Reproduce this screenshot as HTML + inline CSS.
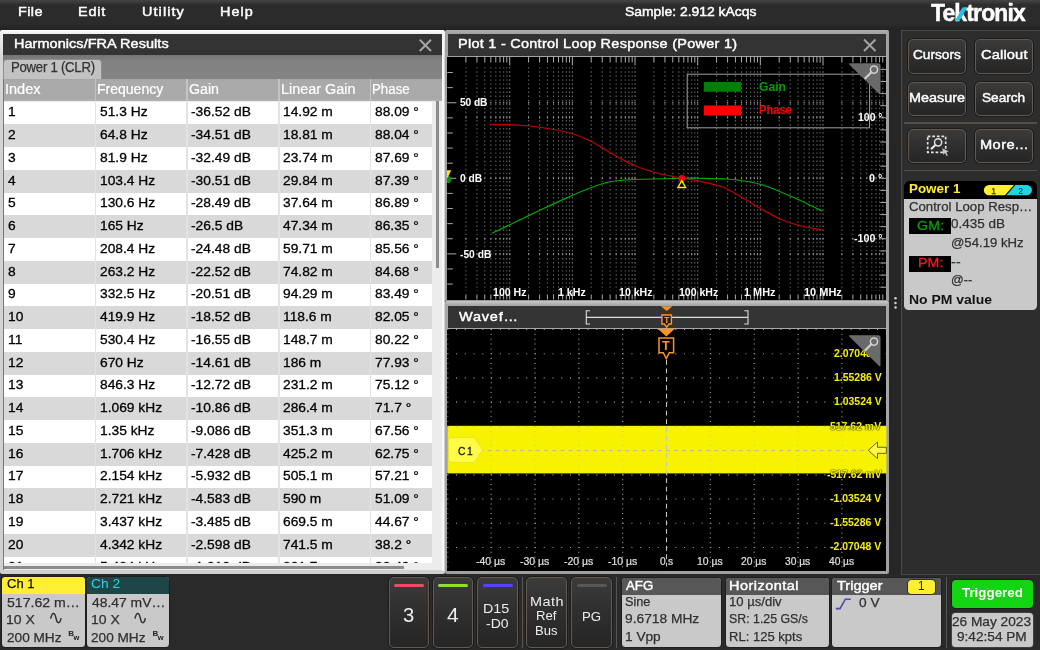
<!DOCTYPE html>
<html lang="en"><head><meta charset="utf-8"><title>Tektronix - Control Loop Response</title>
<style>
html,body{margin:0;padding:0;}
body{width:1040px;height:650px;overflow:hidden;background:#262626;position:relative;
 font-family:"Liberation Sans",sans-serif;}
.b{position:absolute;box-sizing:border-box;}
.t{position:absolute;white-space:nowrap;line-height:1;transform-origin:0 0;display:block;}
svg{position:absolute;overflow:visible;}
#screen{position:absolute;left:0;top:0;width:1040px;height:650px;overflow:hidden;will-change:transform;}
</style></head>
<body>
<div id="screen">
<div id="menubar">
<div class="b" style="left:0px;top:0px;width:1040.00px;height:30.00px;background:linear-gradient(#454545 0,#2c2c2c 5px,#2b2b2b 24px,#222 30px);"></div>
<span class="t" style="left:17.59px;top:5.00px;font-size:13.5px;color:#fff;transform:scaleX(1.0700);-webkit-text-stroke:0.45px #fff;letter-spacing:0.382px;">File</span>
<span class="t" style="left:77.84px;top:5.00px;font-size:13.5px;color:#fff;transform:scaleX(1.0700);-webkit-text-stroke:0.45px #fff;letter-spacing:0.720px;">Edit</span>
<span class="t" style="left:141.92px;top:5.00px;font-size:13.5px;color:#fff;transform:scaleX(1.0700);-webkit-text-stroke:0.45px #fff;letter-spacing:1.015px;">Utility</span>
<span class="t" style="left:219.84px;top:5.00px;font-size:13.5px;color:#fff;transform:scaleX(1.0700);-webkit-text-stroke:0.45px #fff;letter-spacing:0.950px;">Help</span>
<span class="t" style="left:624.87px;top:5.00px;font-size:13.2px;color:#fff;transform:scaleX(1.0551);-webkit-text-stroke:0.45px #fff;">Sample: 2.912 kAcqs</span>
<span class="t" style="left:931.37px;top:1.00px;font-size:24.6px;color:#fff;font-weight:bold;transform:scaleX(0.9300);-webkit-text-stroke:0.5px #fff;letter-spacing:-0.873px;">Tektronix</span>
<svg class="b" style="left:950px;top:4px;width:22px;height:20px" viewBox="950 4 22 20"><path d="M955 20.7 L962.6 7.4 L967.2 7.4 L959.6 20.7 Z" fill="#22bfe8"/></svg>
</div>
<div id="results">
<div class="b" style="left:0px;top:30px;width:444.50px;height:544.00px;background:linear-gradient(#fff,#f0f0f0 3px,#d4d4d4 30px,#d0d0d0);border-radius:2px;"></div>
<div class="b" style="left:2.6px;top:33.5px;width:439.40px;height:21.50px;background:#333;"></div>
<span class="t" style="left:13.84px;top:37.00px;font-size:13.5px;color:#fff;transform:scaleX(1.0700);-webkit-text-stroke:0.45px #fff;letter-spacing:0.062px;">Harmonics/FRA Results</span>
<svg class="b" style="left:417px;top:37px;width:16px;height:16px" viewBox="417 37 16 16"><path d="M419.8 39.8 L431 51 M431 39.8 L419.8 51" stroke="#a4a4a4" stroke-width="2" fill="none"/></svg>
<div class="b" style="left:2.6px;top:55px;width:439.40px;height:24.00px;background:linear-gradient(#747474,#828282 6px,#848484);"></div>
<div class="b" style="left:2.6px;top:79px;width:1.40px;height:491.00px;background:#777;"></div>
<div class="b" style="left:4px;top:60px;width:97.00px;height:19.00px;background:#c2c2c2;border-radius:3px 3px 0 0;box-shadow:0 0 0 0.5px #999;"></div>
<span class="t" style="left:10.84px;top:60.00px;font-size:14.2px;color:#333;transform:scaleX(0.9300);letter-spacing:-0.288px;-webkit-text-stroke:0.25px #333;">Power 1 (CLR)</span>
<div class="b" style="left:4px;top:79px;width:438.00px;height:22.40px;background:linear-gradient(#a4a4a4,#aaa 2px,#a9a9a9 90%,#b4b4b4);"></div>
<div class="b" style="left:94.7px;top:79px;width:1.60px;height:22.00px;background:#c4c4c4;"></div>
<div class="b" style="left:186.2px;top:79px;width:1.60px;height:22.00px;background:#c4c4c4;"></div>
<div class="b" style="left:278.2px;top:79px;width:1.60px;height:22.00px;background:#c4c4c4;"></div>
<div class="b" style="left:369.7px;top:79px;width:1.60px;height:22.00px;background:#c4c4c4;"></div>
<span class="t" style="left:5.19px;top:83.00px;font-size:13.8px;color:#fff;transform:scaleX(1.0537);-webkit-text-stroke:0.2px #fff;">Index</span>
<span class="t" style="left:96.78px;top:83.00px;font-size:13.8px;color:#fff;transform:scaleX(1.0156);-webkit-text-stroke:0.2px #fff;">Frequency</span>
<span class="t" style="left:189.49px;top:83.00px;font-size:13.8px;color:#fff;transform:scaleX(1.0290);-webkit-text-stroke:0.2px #fff;">Gain</span>
<span class="t" style="left:280.85px;top:83.00px;font-size:13.8px;color:#fff;transform:scaleX(1.0430);-webkit-text-stroke:0.2px #fff;">Linear Gain</span>
<span class="t" style="left:372.44px;top:83.00px;font-size:13.8px;color:#fff;transform:scaleX(0.9635);-webkit-text-stroke:0.2px #fff;">Phase</span>
<div class="b" style="left:4px;top:101px;width:438.00px;height:465.00px;background:#ececec;"></div>
<div class="b" style="left:4px;top:101px;width:438px;height:463px;overflow:hidden">
<div class="b" style="left:0;top:0.50px;width:428px;height:22.75px;background:#fff"></div>
<span class="t" style="left:4.10px;top:4.00px;font-size:13.6px;color:#000;transform:scaleX(1.0150);-webkit-text-stroke:0.3px #000;">1</span>
<span class="t" style="left:95.60px;top:4.00px;font-size:13.6px;color:#000;transform:scaleX(1.0150);-webkit-text-stroke:0.3px #000;">51.3 Hz</span>
<span class="t" style="left:187.10px;top:4.00px;font-size:13.6px;color:#000;transform:scaleX(1.0150);-webkit-text-stroke:0.3px #000;">-36.52 dB</span>
<span class="t" style="left:279.10px;top:4.00px;font-size:13.6px;color:#000;transform:scaleX(1.0150);-webkit-text-stroke:0.3px #000;">14.92 m</span>
<span class="t" style="left:370.60px;top:4.00px;font-size:13.6px;color:#000;transform:scaleX(1.0150);-webkit-text-stroke:0.3px #000;">88.09 °</span>
<div class="b" style="left:0;top:23.25px;width:428px;height:22.75px;background:#d9d9d9"></div>
<span class="t" style="left:4.10px;top:27.00px;font-size:13.6px;color:#000;transform:scaleX(1.0150);-webkit-text-stroke:0.3px #000;">2</span>
<span class="t" style="left:95.60px;top:27.00px;font-size:13.6px;color:#000;transform:scaleX(1.0150);-webkit-text-stroke:0.3px #000;">64.8 Hz</span>
<span class="t" style="left:187.10px;top:27.00px;font-size:13.6px;color:#000;transform:scaleX(1.0150);-webkit-text-stroke:0.3px #000;">-34.51 dB</span>
<span class="t" style="left:279.10px;top:27.00px;font-size:13.6px;color:#000;transform:scaleX(1.0150);-webkit-text-stroke:0.3px #000;">18.81 m</span>
<span class="t" style="left:370.60px;top:27.00px;font-size:13.6px;color:#000;transform:scaleX(1.0150);-webkit-text-stroke:0.3px #000;">88.04 °</span>
<div class="b" style="left:0;top:46.00px;width:428px;height:22.75px;background:#fff"></div>
<span class="t" style="left:4.10px;top:50.00px;font-size:13.6px;color:#000;transform:scaleX(1.0150);-webkit-text-stroke:0.3px #000;">3</span>
<span class="t" style="left:95.60px;top:50.00px;font-size:13.6px;color:#000;transform:scaleX(1.0150);-webkit-text-stroke:0.3px #000;">81.9 Hz</span>
<span class="t" style="left:187.10px;top:50.00px;font-size:13.6px;color:#000;transform:scaleX(1.0150);-webkit-text-stroke:0.3px #000;">-32.49 dB</span>
<span class="t" style="left:279.10px;top:50.00px;font-size:13.6px;color:#000;transform:scaleX(1.0150);-webkit-text-stroke:0.3px #000;">23.74 m</span>
<span class="t" style="left:370.60px;top:50.00px;font-size:13.6px;color:#000;transform:scaleX(1.0150);-webkit-text-stroke:0.3px #000;">87.69 °</span>
<div class="b" style="left:0;top:68.75px;width:428px;height:22.75px;background:#d9d9d9"></div>
<span class="t" style="left:4.10px;top:73.00px;font-size:13.6px;color:#000;transform:scaleX(1.0150);-webkit-text-stroke:0.3px #000;">4</span>
<span class="t" style="left:95.60px;top:73.00px;font-size:13.6px;color:#000;transform:scaleX(1.0150);-webkit-text-stroke:0.3px #000;">103.4 Hz</span>
<span class="t" style="left:187.10px;top:73.00px;font-size:13.6px;color:#000;transform:scaleX(1.0150);-webkit-text-stroke:0.3px #000;">-30.51 dB</span>
<span class="t" style="left:279.10px;top:73.00px;font-size:13.6px;color:#000;transform:scaleX(1.0150);-webkit-text-stroke:0.3px #000;">29.84 m</span>
<span class="t" style="left:370.60px;top:73.00px;font-size:13.6px;color:#000;transform:scaleX(1.0150);-webkit-text-stroke:0.3px #000;">87.39 °</span>
<div class="b" style="left:0;top:91.50px;width:428px;height:22.75px;background:#fff"></div>
<span class="t" style="left:4.10px;top:95.00px;font-size:13.6px;color:#000;transform:scaleX(1.0150);-webkit-text-stroke:0.3px #000;">5</span>
<span class="t" style="left:95.60px;top:95.00px;font-size:13.6px;color:#000;transform:scaleX(1.0150);-webkit-text-stroke:0.3px #000;">130.6 Hz</span>
<span class="t" style="left:187.10px;top:95.00px;font-size:13.6px;color:#000;transform:scaleX(1.0150);-webkit-text-stroke:0.3px #000;">-28.49 dB</span>
<span class="t" style="left:279.10px;top:95.00px;font-size:13.6px;color:#000;transform:scaleX(1.0150);-webkit-text-stroke:0.3px #000;">37.64 m</span>
<span class="t" style="left:370.60px;top:95.00px;font-size:13.6px;color:#000;transform:scaleX(1.0150);-webkit-text-stroke:0.3px #000;">86.89 °</span>
<div class="b" style="left:0;top:114.25px;width:428px;height:22.75px;background:#d9d9d9"></div>
<span class="t" style="left:4.10px;top:118.00px;font-size:13.6px;color:#000;transform:scaleX(1.0150);-webkit-text-stroke:0.3px #000;">6</span>
<span class="t" style="left:95.60px;top:118.00px;font-size:13.6px;color:#000;transform:scaleX(1.0150);-webkit-text-stroke:0.3px #000;">165 Hz</span>
<span class="t" style="left:187.10px;top:118.00px;font-size:13.6px;color:#000;transform:scaleX(1.0150);-webkit-text-stroke:0.3px #000;">-26.5 dB</span>
<span class="t" style="left:279.10px;top:118.00px;font-size:13.6px;color:#000;transform:scaleX(1.0150);-webkit-text-stroke:0.3px #000;">47.34 m</span>
<span class="t" style="left:370.60px;top:118.00px;font-size:13.6px;color:#000;transform:scaleX(1.0150);-webkit-text-stroke:0.3px #000;">86.35 °</span>
<div class="b" style="left:0;top:137.00px;width:428px;height:22.75px;background:#fff"></div>
<span class="t" style="left:4.10px;top:141.00px;font-size:13.6px;color:#000;transform:scaleX(1.0150);-webkit-text-stroke:0.3px #000;">7</span>
<span class="t" style="left:95.60px;top:141.00px;font-size:13.6px;color:#000;transform:scaleX(1.0150);-webkit-text-stroke:0.3px #000;">208.4 Hz</span>
<span class="t" style="left:187.10px;top:141.00px;font-size:13.6px;color:#000;transform:scaleX(1.0150);-webkit-text-stroke:0.3px #000;">-24.48 dB</span>
<span class="t" style="left:279.10px;top:141.00px;font-size:13.6px;color:#000;transform:scaleX(1.0150);-webkit-text-stroke:0.3px #000;">59.71 m</span>
<span class="t" style="left:370.60px;top:141.00px;font-size:13.6px;color:#000;transform:scaleX(1.0150);-webkit-text-stroke:0.3px #000;">85.56 °</span>
<div class="b" style="left:0;top:159.75px;width:428px;height:22.75px;background:#d9d9d9"></div>
<span class="t" style="left:4.10px;top:164.00px;font-size:13.6px;color:#000;transform:scaleX(1.0150);-webkit-text-stroke:0.3px #000;">8</span>
<span class="t" style="left:95.60px;top:164.00px;font-size:13.6px;color:#000;transform:scaleX(1.0150);-webkit-text-stroke:0.3px #000;">263.2 Hz</span>
<span class="t" style="left:187.10px;top:164.00px;font-size:13.6px;color:#000;transform:scaleX(1.0150);-webkit-text-stroke:0.3px #000;">-22.52 dB</span>
<span class="t" style="left:279.10px;top:164.00px;font-size:13.6px;color:#000;transform:scaleX(1.0150);-webkit-text-stroke:0.3px #000;">74.82 m</span>
<span class="t" style="left:370.60px;top:164.00px;font-size:13.6px;color:#000;transform:scaleX(1.0150);-webkit-text-stroke:0.3px #000;">84.68 °</span>
<div class="b" style="left:0;top:182.50px;width:428px;height:22.75px;background:#fff"></div>
<span class="t" style="left:4.10px;top:186.00px;font-size:13.6px;color:#000;transform:scaleX(1.0150);-webkit-text-stroke:0.3px #000;">9</span>
<span class="t" style="left:95.60px;top:186.00px;font-size:13.6px;color:#000;transform:scaleX(1.0150);-webkit-text-stroke:0.3px #000;">332.5 Hz</span>
<span class="t" style="left:187.10px;top:186.00px;font-size:13.6px;color:#000;transform:scaleX(1.0150);-webkit-text-stroke:0.3px #000;">-20.51 dB</span>
<span class="t" style="left:279.10px;top:186.00px;font-size:13.6px;color:#000;transform:scaleX(1.0150);-webkit-text-stroke:0.3px #000;">94.29 m</span>
<span class="t" style="left:370.60px;top:186.00px;font-size:13.6px;color:#000;transform:scaleX(1.0150);-webkit-text-stroke:0.3px #000;">83.49 °</span>
<div class="b" style="left:0;top:205.25px;width:428px;height:22.75px;background:#d9d9d9"></div>
<span class="t" style="left:4.10px;top:209.00px;font-size:13.6px;color:#000;transform:scaleX(1.0150);-webkit-text-stroke:0.3px #000;">10</span>
<span class="t" style="left:95.60px;top:209.00px;font-size:13.6px;color:#000;transform:scaleX(1.0150);-webkit-text-stroke:0.3px #000;">419.9 Hz</span>
<span class="t" style="left:187.10px;top:209.00px;font-size:13.6px;color:#000;transform:scaleX(1.0150);-webkit-text-stroke:0.3px #000;">-18.52 dB</span>
<span class="t" style="left:279.10px;top:209.00px;font-size:13.6px;color:#000;transform:scaleX(1.0150);-webkit-text-stroke:0.3px #000;">118.6 m</span>
<span class="t" style="left:370.60px;top:209.00px;font-size:13.6px;color:#000;transform:scaleX(1.0150);-webkit-text-stroke:0.3px #000;">82.05 °</span>
<div class="b" style="left:0;top:228.00px;width:428px;height:22.75px;background:#fff"></div>
<span class="t" style="left:4.10px;top:232.00px;font-size:13.6px;color:#000;transform:scaleX(1.0150);-webkit-text-stroke:0.3px #000;">11</span>
<span class="t" style="left:95.60px;top:232.00px;font-size:13.6px;color:#000;transform:scaleX(1.0150);-webkit-text-stroke:0.3px #000;">530.4 Hz</span>
<span class="t" style="left:187.10px;top:232.00px;font-size:13.6px;color:#000;transform:scaleX(1.0150);-webkit-text-stroke:0.3px #000;">-16.55 dB</span>
<span class="t" style="left:279.10px;top:232.00px;font-size:13.6px;color:#000;transform:scaleX(1.0150);-webkit-text-stroke:0.3px #000;">148.7 m</span>
<span class="t" style="left:370.60px;top:232.00px;font-size:13.6px;color:#000;transform:scaleX(1.0150);-webkit-text-stroke:0.3px #000;">80.22 °</span>
<div class="b" style="left:0;top:250.75px;width:428px;height:22.75px;background:#d9d9d9"></div>
<span class="t" style="left:4.10px;top:255.00px;font-size:13.6px;color:#000;transform:scaleX(1.0150);-webkit-text-stroke:0.3px #000;">12</span>
<span class="t" style="left:95.60px;top:255.00px;font-size:13.6px;color:#000;transform:scaleX(1.0150);-webkit-text-stroke:0.3px #000;">670 Hz</span>
<span class="t" style="left:187.10px;top:255.00px;font-size:13.6px;color:#000;transform:scaleX(1.0150);-webkit-text-stroke:0.3px #000;">-14.61 dB</span>
<span class="t" style="left:279.10px;top:255.00px;font-size:13.6px;color:#000;transform:scaleX(1.0150);-webkit-text-stroke:0.3px #000;">186 m</span>
<span class="t" style="left:370.60px;top:255.00px;font-size:13.6px;color:#000;transform:scaleX(1.0150);-webkit-text-stroke:0.3px #000;">77.93 °</span>
<div class="b" style="left:0;top:273.50px;width:428px;height:22.75px;background:#fff"></div>
<span class="t" style="left:4.10px;top:277.00px;font-size:13.6px;color:#000;transform:scaleX(1.0150);-webkit-text-stroke:0.3px #000;">13</span>
<span class="t" style="left:95.60px;top:277.00px;font-size:13.6px;color:#000;transform:scaleX(1.0150);-webkit-text-stroke:0.3px #000;">846.3 Hz</span>
<span class="t" style="left:187.10px;top:277.00px;font-size:13.6px;color:#000;transform:scaleX(1.0150);-webkit-text-stroke:0.3px #000;">-12.72 dB</span>
<span class="t" style="left:279.10px;top:277.00px;font-size:13.6px;color:#000;transform:scaleX(1.0150);-webkit-text-stroke:0.3px #000;">231.2 m</span>
<span class="t" style="left:370.60px;top:277.00px;font-size:13.6px;color:#000;transform:scaleX(1.0150);-webkit-text-stroke:0.3px #000;">75.12 °</span>
<div class="b" style="left:0;top:296.25px;width:428px;height:22.75px;background:#d9d9d9"></div>
<span class="t" style="left:4.10px;top:300.00px;font-size:13.6px;color:#000;transform:scaleX(1.0150);-webkit-text-stroke:0.3px #000;">14</span>
<span class="t" style="left:95.60px;top:300.00px;font-size:13.6px;color:#000;transform:scaleX(1.0150);-webkit-text-stroke:0.3px #000;">1.069 kHz</span>
<span class="t" style="left:187.10px;top:300.00px;font-size:13.6px;color:#000;transform:scaleX(1.0150);-webkit-text-stroke:0.3px #000;">-10.86 dB</span>
<span class="t" style="left:279.10px;top:300.00px;font-size:13.6px;color:#000;transform:scaleX(1.0150);-webkit-text-stroke:0.3px #000;">286.4 m</span>
<span class="t" style="left:370.60px;top:300.00px;font-size:13.6px;color:#000;transform:scaleX(1.0150);-webkit-text-stroke:0.3px #000;">71.7 °</span>
<div class="b" style="left:0;top:319.00px;width:428px;height:22.75px;background:#fff"></div>
<span class="t" style="left:4.10px;top:323.00px;font-size:13.6px;color:#000;transform:scaleX(1.0150);-webkit-text-stroke:0.3px #000;">15</span>
<span class="t" style="left:95.60px;top:323.00px;font-size:13.6px;color:#000;transform:scaleX(1.0150);-webkit-text-stroke:0.3px #000;">1.35 kHz</span>
<span class="t" style="left:187.10px;top:323.00px;font-size:13.6px;color:#000;transform:scaleX(1.0150);-webkit-text-stroke:0.3px #000;">-9.086 dB</span>
<span class="t" style="left:279.10px;top:323.00px;font-size:13.6px;color:#000;transform:scaleX(1.0150);-webkit-text-stroke:0.3px #000;">351.3 m</span>
<span class="t" style="left:370.60px;top:323.00px;font-size:13.6px;color:#000;transform:scaleX(1.0150);-webkit-text-stroke:0.3px #000;">67.56 °</span>
<div class="b" style="left:0;top:341.75px;width:428px;height:22.75px;background:#d9d9d9"></div>
<span class="t" style="left:4.10px;top:346.00px;font-size:13.6px;color:#000;transform:scaleX(1.0150);-webkit-text-stroke:0.3px #000;">16</span>
<span class="t" style="left:95.60px;top:346.00px;font-size:13.6px;color:#000;transform:scaleX(1.0150);-webkit-text-stroke:0.3px #000;">1.706 kHz</span>
<span class="t" style="left:187.10px;top:346.00px;font-size:13.6px;color:#000;transform:scaleX(1.0150);-webkit-text-stroke:0.3px #000;">-7.428 dB</span>
<span class="t" style="left:279.10px;top:346.00px;font-size:13.6px;color:#000;transform:scaleX(1.0150);-webkit-text-stroke:0.3px #000;">425.2 m</span>
<span class="t" style="left:370.60px;top:346.00px;font-size:13.6px;color:#000;transform:scaleX(1.0150);-webkit-text-stroke:0.3px #000;">62.75 °</span>
<div class="b" style="left:0;top:364.50px;width:428px;height:22.75px;background:#fff"></div>
<span class="t" style="left:4.10px;top:368.00px;font-size:13.6px;color:#000;transform:scaleX(1.0150);-webkit-text-stroke:0.3px #000;">17</span>
<span class="t" style="left:95.60px;top:368.00px;font-size:13.6px;color:#000;transform:scaleX(1.0150);-webkit-text-stroke:0.3px #000;">2.154 kHz</span>
<span class="t" style="left:187.10px;top:368.00px;font-size:13.6px;color:#000;transform:scaleX(1.0150);-webkit-text-stroke:0.3px #000;">-5.932 dB</span>
<span class="t" style="left:279.10px;top:368.00px;font-size:13.6px;color:#000;transform:scaleX(1.0150);-webkit-text-stroke:0.3px #000;">505.1 m</span>
<span class="t" style="left:370.60px;top:368.00px;font-size:13.6px;color:#000;transform:scaleX(1.0150);-webkit-text-stroke:0.3px #000;">57.21 °</span>
<div class="b" style="left:0;top:387.25px;width:428px;height:22.75px;background:#d9d9d9"></div>
<span class="t" style="left:4.10px;top:391.00px;font-size:13.6px;color:#000;transform:scaleX(1.0150);-webkit-text-stroke:0.3px #000;">18</span>
<span class="t" style="left:95.60px;top:391.00px;font-size:13.6px;color:#000;transform:scaleX(1.0150);-webkit-text-stroke:0.3px #000;">2.721 kHz</span>
<span class="t" style="left:187.10px;top:391.00px;font-size:13.6px;color:#000;transform:scaleX(1.0150);-webkit-text-stroke:0.3px #000;">-4.583 dB</span>
<span class="t" style="left:279.10px;top:391.00px;font-size:13.6px;color:#000;transform:scaleX(1.0150);-webkit-text-stroke:0.3px #000;">590 m</span>
<span class="t" style="left:370.60px;top:391.00px;font-size:13.6px;color:#000;transform:scaleX(1.0150);-webkit-text-stroke:0.3px #000;">51.09 °</span>
<div class="b" style="left:0;top:410.00px;width:428px;height:22.75px;background:#fff"></div>
<span class="t" style="left:4.10px;top:414.00px;font-size:13.6px;color:#000;transform:scaleX(1.0150);-webkit-text-stroke:0.3px #000;">19</span>
<span class="t" style="left:95.60px;top:414.00px;font-size:13.6px;color:#000;transform:scaleX(1.0150);-webkit-text-stroke:0.3px #000;">3.437 kHz</span>
<span class="t" style="left:187.10px;top:414.00px;font-size:13.6px;color:#000;transform:scaleX(1.0150);-webkit-text-stroke:0.3px #000;">-3.485 dB</span>
<span class="t" style="left:279.10px;top:414.00px;font-size:13.6px;color:#000;transform:scaleX(1.0150);-webkit-text-stroke:0.3px #000;">669.5 m</span>
<span class="t" style="left:370.60px;top:414.00px;font-size:13.6px;color:#000;transform:scaleX(1.0150);-webkit-text-stroke:0.3px #000;">44.67 °</span>
<div class="b" style="left:0;top:432.75px;width:428px;height:22.75px;background:#d9d9d9"></div>
<span class="t" style="left:4.10px;top:437.00px;font-size:13.6px;color:#000;transform:scaleX(1.0150);-webkit-text-stroke:0.3px #000;">20</span>
<span class="t" style="left:95.60px;top:437.00px;font-size:13.6px;color:#000;transform:scaleX(1.0150);-webkit-text-stroke:0.3px #000;">4.342 kHz</span>
<span class="t" style="left:187.10px;top:437.00px;font-size:13.6px;color:#000;transform:scaleX(1.0150);-webkit-text-stroke:0.3px #000;">-2.598 dB</span>
<span class="t" style="left:279.10px;top:437.00px;font-size:13.6px;color:#000;transform:scaleX(1.0150);-webkit-text-stroke:0.3px #000;">741.5 m</span>
<span class="t" style="left:370.60px;top:437.00px;font-size:13.6px;color:#000;transform:scaleX(1.0150);-webkit-text-stroke:0.3px #000;">38.2 °</span>
<div class="b" style="left:0;top:455.50px;width:428px;height:22.75px;background:#fff"></div>
<span class="t" style="left:4.10px;top:459.00px;font-size:13.6px;color:#000;transform:scaleX(1.0150);-webkit-text-stroke:0.3px #000;">21</span>
<span class="t" style="left:95.60px;top:459.00px;font-size:13.6px;color:#000;transform:scaleX(1.0150);-webkit-text-stroke:0.3px #000;">5.484 kHz</span>
<span class="t" style="left:187.10px;top:459.00px;font-size:13.6px;color:#000;transform:scaleX(1.0150);-webkit-text-stroke:0.3px #000;">-1.919 dB</span>
<span class="t" style="left:279.10px;top:459.00px;font-size:13.6px;color:#000;transform:scaleX(1.0150);-webkit-text-stroke:0.3px #000;">801.7 m</span>
<span class="t" style="left:370.60px;top:459.00px;font-size:13.6px;color:#000;transform:scaleX(1.0150);-webkit-text-stroke:0.3px #000;">30.49 °</span>
<div class="b" style="left:90.9px;top:0;width:1.4px;height:463px;background:#e3e3e3"></div>
<div class="b" style="left:182.4px;top:0;width:1.4px;height:463px;background:#e3e3e3"></div>
<div class="b" style="left:274.4px;top:0;width:1.4px;height:463px;background:#e3e3e3"></div>
<div class="b" style="left:365.9px;top:0;width:1.4px;height:463px;background:#e3e3e3"></div>
</div>
<div class="b" style="left:441.9px;top:33.5px;width:2.60px;height:537.50px;background:#f8f8f8;"></div>
<div class="b" style="left:436.3px;top:101px;width:2.90px;height:167.00px;background:#8c8c8c;"></div>
<div class="b" style="left:4px;top:562.5px;width:438.00px;height:7.80px;background:#ececec;"></div>
<div class="b" style="left:4px;top:566.2px;width:399.50px;height:3.00px;background:#8c8c8c;"></div>
</div>
<div id="plot1">
<div class="b" style="left:444.6px;top:30.3px;width:444.40px;height:271.70px;background:linear-gradient(#b4b0b0,#a4a4a4 3px,#999);border-radius:2px;"></div>
<div class="b" style="left:447.5px;top:33.5px;width:438.80px;height:22.00px;background:#333;"></div>
<span class="t" style="left:458.09px;top:37.00px;font-size:13.5px;color:#fff;transform:scaleX(1.0700);-webkit-text-stroke:0.45px #fff;letter-spacing:0.260px;">Plot 1 - Control Loop Response (Power 1)</span>
<svg class="b" style="left:860px;top:37px;width:18px;height:16px" viewBox="860 37 18 16"><path d="M864 39.5 L875.5 51 M875.5 39.5 L864 51" stroke="#a4a4a4" stroke-width="2" fill="none"/></svg>
<div class="b" style="left:447.3px;top:56.5px;width:439.00px;height:243.00px;background:#000;"></div>
<svg class="b" style="left:0;top:0;width:1040px;height:650px" viewBox="0 0 1040 650"><g fill="none" stroke-width="1.1" stroke-dasharray="1.4 2.66"><path d="M465.91 67.2V291" stroke="#646464"/><path d="M465.91 56.5v6M465.91 299.5v-5" stroke="#c0c0c0" stroke-width="0.9" stroke-dasharray="none"/><path d="M476.95 67.2V291" stroke="#646464"/><path d="M476.95 56.5v6M476.95 299.5v-5" stroke="#c0c0c0" stroke-width="0.9" stroke-dasharray="none"/><path d="M484.78 67.2V291" stroke="#646464"/><path d="M484.78 56.5v6M484.78 299.5v-5" stroke="#c0c0c0" stroke-width="0.9" stroke-dasharray="none"/><path d="M490.85 67.2V291" stroke="#646464"/><path d="M490.85 56.5v6M490.85 299.5v-5" stroke="#c0c0c0" stroke-width="0.9" stroke-dasharray="none"/><path d="M495.81 67.2V291" stroke="#646464"/><path d="M495.81 56.5v6M495.81 299.5v-5" stroke="#c0c0c0" stroke-width="0.9" stroke-dasharray="none"/><path d="M500.00 67.2V291" stroke="#646464"/><path d="M500.00 56.5v6M500.00 299.5v-5" stroke="#c0c0c0" stroke-width="0.9" stroke-dasharray="none"/><path d="M503.64 67.2V291" stroke="#646464"/><path d="M503.64 56.5v6M503.64 299.5v-5" stroke="#c0c0c0" stroke-width="0.9" stroke-dasharray="none"/><path d="M506.84 67.2V291" stroke="#646464"/><path d="M506.84 56.5v6M506.84 299.5v-5" stroke="#c0c0c0" stroke-width="0.9" stroke-dasharray="none"/><path d="M509.71 67.2V291" stroke="#828282"/><path d="M509.71 56.5v9M509.71 299.5v-8" stroke="#c0c0c0" stroke-width="0.9" stroke-dasharray="none"/><path d="M528.57 67.2V291" stroke="#646464"/><path d="M528.57 56.5v6M528.57 299.5v-5" stroke="#c0c0c0" stroke-width="0.9" stroke-dasharray="none"/><path d="M539.61 67.2V291" stroke="#646464"/><path d="M539.61 56.5v6M539.61 299.5v-5" stroke="#c0c0c0" stroke-width="0.9" stroke-dasharray="none"/><path d="M547.44 67.2V291" stroke="#646464"/><path d="M547.44 56.5v6M547.44 299.5v-5" stroke="#c0c0c0" stroke-width="0.9" stroke-dasharray="none"/><path d="M553.51 67.2V291" stroke="#646464"/><path d="M553.51 56.5v6M553.51 299.5v-5" stroke="#c0c0c0" stroke-width="0.9" stroke-dasharray="none"/><path d="M558.47 67.2V291" stroke="#646464"/><path d="M558.47 56.5v6M558.47 299.5v-5" stroke="#c0c0c0" stroke-width="0.9" stroke-dasharray="none"/><path d="M562.66 67.2V291" stroke="#646464"/><path d="M562.66 56.5v6M562.66 299.5v-5" stroke="#c0c0c0" stroke-width="0.9" stroke-dasharray="none"/><path d="M566.30 67.2V291" stroke="#646464"/><path d="M566.30 56.5v6M566.30 299.5v-5" stroke="#c0c0c0" stroke-width="0.9" stroke-dasharray="none"/><path d="M569.50 67.2V291" stroke="#646464"/><path d="M569.50 56.5v6M569.50 299.5v-5" stroke="#c0c0c0" stroke-width="0.9" stroke-dasharray="none"/><path d="M572.37 67.2V291" stroke="#828282"/><path d="M572.37 56.5v9M572.37 299.5v-8" stroke="#c0c0c0" stroke-width="0.9" stroke-dasharray="none"/><path d="M591.23 67.2V291" stroke="#646464"/><path d="M591.23 56.5v6M591.23 299.5v-5" stroke="#c0c0c0" stroke-width="0.9" stroke-dasharray="none"/><path d="M602.27 67.2V291" stroke="#646464"/><path d="M602.27 56.5v6M602.27 299.5v-5" stroke="#c0c0c0" stroke-width="0.9" stroke-dasharray="none"/><path d="M610.10 67.2V291" stroke="#646464"/><path d="M610.10 56.5v6M610.10 299.5v-5" stroke="#c0c0c0" stroke-width="0.9" stroke-dasharray="none"/><path d="M616.17 67.2V291" stroke="#646464"/><path d="M616.17 56.5v6M616.17 299.5v-5" stroke="#c0c0c0" stroke-width="0.9" stroke-dasharray="none"/><path d="M621.13 67.2V291" stroke="#646464"/><path d="M621.13 56.5v6M621.13 299.5v-5" stroke="#c0c0c0" stroke-width="0.9" stroke-dasharray="none"/><path d="M625.32 67.2V291" stroke="#646464"/><path d="M625.32 56.5v6M625.32 299.5v-5" stroke="#c0c0c0" stroke-width="0.9" stroke-dasharray="none"/><path d="M628.96 67.2V291" stroke="#646464"/><path d="M628.96 56.5v6M628.96 299.5v-5" stroke="#c0c0c0" stroke-width="0.9" stroke-dasharray="none"/><path d="M632.16 67.2V291" stroke="#646464"/><path d="M632.16 56.5v6M632.16 299.5v-5" stroke="#c0c0c0" stroke-width="0.9" stroke-dasharray="none"/><path d="M635.03 67.2V291" stroke="#828282"/><path d="M635.03 56.5v9M635.03 299.5v-8" stroke="#c0c0c0" stroke-width="0.9" stroke-dasharray="none"/><path d="M653.89 67.2V291" stroke="#646464"/><path d="M653.89 56.5v6M653.89 299.5v-5" stroke="#c0c0c0" stroke-width="0.9" stroke-dasharray="none"/><path d="M664.93 67.2V291" stroke="#646464"/><path d="M664.93 56.5v6M664.93 299.5v-5" stroke="#c0c0c0" stroke-width="0.9" stroke-dasharray="none"/><path d="M672.76 67.2V291" stroke="#646464"/><path d="M672.76 56.5v6M672.76 299.5v-5" stroke="#c0c0c0" stroke-width="0.9" stroke-dasharray="none"/><path d="M678.83 67.2V291" stroke="#646464"/><path d="M678.83 56.5v6M678.83 299.5v-5" stroke="#c0c0c0" stroke-width="0.9" stroke-dasharray="none"/><path d="M683.79 67.2V291" stroke="#646464"/><path d="M683.79 56.5v6M683.79 299.5v-5" stroke="#c0c0c0" stroke-width="0.9" stroke-dasharray="none"/><path d="M687.98 67.2V291" stroke="#646464"/><path d="M687.98 56.5v6M687.98 299.5v-5" stroke="#c0c0c0" stroke-width="0.9" stroke-dasharray="none"/><path d="M691.62 67.2V291" stroke="#646464"/><path d="M691.62 56.5v6M691.62 299.5v-5" stroke="#c0c0c0" stroke-width="0.9" stroke-dasharray="none"/><path d="M694.82 67.2V291" stroke="#646464"/><path d="M694.82 56.5v6M694.82 299.5v-5" stroke="#c0c0c0" stroke-width="0.9" stroke-dasharray="none"/><path d="M697.69 67.2V291" stroke="#828282"/><path d="M697.69 56.5v9M697.69 299.5v-8" stroke="#c0c0c0" stroke-width="0.9" stroke-dasharray="none"/><path d="M716.55 67.2V291" stroke="#646464"/><path d="M716.55 56.5v6M716.55 299.5v-5" stroke="#c0c0c0" stroke-width="0.9" stroke-dasharray="none"/><path d="M727.59 67.2V291" stroke="#646464"/><path d="M727.59 56.5v6M727.59 299.5v-5" stroke="#c0c0c0" stroke-width="0.9" stroke-dasharray="none"/><path d="M735.42 67.2V291" stroke="#646464"/><path d="M735.42 56.5v6M735.42 299.5v-5" stroke="#c0c0c0" stroke-width="0.9" stroke-dasharray="none"/><path d="M741.49 67.2V291" stroke="#646464"/><path d="M741.49 56.5v6M741.49 299.5v-5" stroke="#c0c0c0" stroke-width="0.9" stroke-dasharray="none"/><path d="M746.45 67.2V291" stroke="#646464"/><path d="M746.45 56.5v6M746.45 299.5v-5" stroke="#c0c0c0" stroke-width="0.9" stroke-dasharray="none"/><path d="M750.64 67.2V291" stroke="#646464"/><path d="M750.64 56.5v6M750.64 299.5v-5" stroke="#c0c0c0" stroke-width="0.9" stroke-dasharray="none"/><path d="M754.28 67.2V291" stroke="#646464"/><path d="M754.28 56.5v6M754.28 299.5v-5" stroke="#c0c0c0" stroke-width="0.9" stroke-dasharray="none"/><path d="M757.48 67.2V291" stroke="#646464"/><path d="M757.48 56.5v6M757.48 299.5v-5" stroke="#c0c0c0" stroke-width="0.9" stroke-dasharray="none"/><path d="M760.35 67.2V291" stroke="#828282"/><path d="M760.35 56.5v9M760.35 299.5v-8" stroke="#c0c0c0" stroke-width="0.9" stroke-dasharray="none"/><path d="M779.21 67.2V291" stroke="#646464"/><path d="M779.21 56.5v6M779.21 299.5v-5" stroke="#c0c0c0" stroke-width="0.9" stroke-dasharray="none"/><path d="M790.25 67.2V291" stroke="#646464"/><path d="M790.25 56.5v6M790.25 299.5v-5" stroke="#c0c0c0" stroke-width="0.9" stroke-dasharray="none"/><path d="M798.08 67.2V291" stroke="#646464"/><path d="M798.08 56.5v6M798.08 299.5v-5" stroke="#c0c0c0" stroke-width="0.9" stroke-dasharray="none"/><path d="M804.15 67.2V291" stroke="#646464"/><path d="M804.15 56.5v6M804.15 299.5v-5" stroke="#c0c0c0" stroke-width="0.9" stroke-dasharray="none"/><path d="M809.11 67.2V291" stroke="#646464"/><path d="M809.11 56.5v6M809.11 299.5v-5" stroke="#c0c0c0" stroke-width="0.9" stroke-dasharray="none"/><path d="M813.30 67.2V291" stroke="#646464"/><path d="M813.30 56.5v6M813.30 299.5v-5" stroke="#c0c0c0" stroke-width="0.9" stroke-dasharray="none"/><path d="M816.94 67.2V291" stroke="#646464"/><path d="M816.94 56.5v6M816.94 299.5v-5" stroke="#c0c0c0" stroke-width="0.9" stroke-dasharray="none"/><path d="M820.14 67.2V291" stroke="#646464"/><path d="M820.14 56.5v6M820.14 299.5v-5" stroke="#c0c0c0" stroke-width="0.9" stroke-dasharray="none"/><path d="M823.01 67.2V291" stroke="#828282"/><path d="M823.01 56.5v9M823.01 299.5v-8" stroke="#c0c0c0" stroke-width="0.9" stroke-dasharray="none"/><path d="M841.87 67.2V291" stroke="#646464"/><path d="M841.87 56.5v6M841.87 299.5v-5" stroke="#c0c0c0" stroke-width="0.9" stroke-dasharray="none"/><path d="M852.91 67.2V291" stroke="#646464"/><path d="M852.91 56.5v6M852.91 299.5v-5" stroke="#c0c0c0" stroke-width="0.9" stroke-dasharray="none"/><path d="M860.74 67.2V291" stroke="#646464"/><path d="M860.74 56.5v6M860.74 299.5v-5" stroke="#c0c0c0" stroke-width="0.9" stroke-dasharray="none"/><path d="M866.81 67.2V291" stroke="#646464"/><path d="M866.81 56.5v6M866.81 299.5v-5" stroke="#c0c0c0" stroke-width="0.9" stroke-dasharray="none"/><path d="M871.77 67.2V291" stroke="#646464"/><path d="M871.77 56.5v6M871.77 299.5v-5" stroke="#c0c0c0" stroke-width="0.9" stroke-dasharray="none"/><path d="M875.96 67.2V291" stroke="#646464"/><path d="M875.96 56.5v6M875.96 299.5v-5" stroke="#c0c0c0" stroke-width="0.9" stroke-dasharray="none"/><path d="M879.60 67.2V291" stroke="#646464"/><path d="M879.60 56.5v6M879.60 299.5v-5" stroke="#c0c0c0" stroke-width="0.9" stroke-dasharray="none"/><path d="M882.80 67.2V291" stroke="#646464"/><path d="M882.80 56.5v6M882.80 299.5v-5" stroke="#c0c0c0" stroke-width="0.9" stroke-dasharray="none"/></g><path d="M465.91 101.80v1.8M476.95 101.80v1.8M484.78 101.80v1.8M490.85 101.80v1.8M495.81 101.80v1.8M500.00 101.80v1.8M503.64 101.80v1.8M506.84 101.80v1.8M509.71 101.80v1.8M528.57 101.80v1.8M539.61 101.80v1.8M547.44 101.80v1.8M553.51 101.80v1.8M558.47 101.80v1.8M562.66 101.80v1.8M566.30 101.80v1.8M569.50 101.80v1.8M572.37 101.80v1.8M591.23 101.80v1.8M602.27 101.80v1.8M610.10 101.80v1.8M616.17 101.80v1.8M621.13 101.80v1.8M625.32 101.80v1.8M628.96 101.80v1.8M632.16 101.80v1.8M635.03 101.80v1.8M653.89 101.80v1.8M664.93 101.80v1.8M672.76 101.80v1.8M678.83 101.80v1.8M683.79 101.80v1.8M687.98 101.80v1.8M691.62 101.80v1.8M694.82 101.80v1.8M697.69 101.80v1.8M716.55 101.80v1.8M727.59 101.80v1.8M735.42 101.80v1.8M741.49 101.80v1.8M746.45 101.80v1.8M750.64 101.80v1.8M754.28 101.80v1.8M757.48 101.80v1.8M760.35 101.80v1.8M779.21 101.80v1.8M790.25 101.80v1.8M798.08 101.80v1.8M804.15 101.80v1.8M809.11 101.80v1.8M813.30 101.80v1.8M816.94 101.80v1.8M820.14 101.80v1.8M823.01 101.80v1.8M841.87 101.80v1.8M852.91 101.80v1.8M860.74 101.80v1.8M866.81 101.80v1.8M871.77 101.80v1.8M875.96 101.80v1.8M879.60 101.80v1.8M882.80 101.80v1.8M465.91 116.60v1.8M476.95 116.60v1.8M484.78 116.60v1.8M490.85 116.60v1.8M495.81 116.60v1.8M500.00 116.60v1.8M503.64 116.60v1.8M506.84 116.60v1.8M509.71 116.60v1.8M528.57 116.60v1.8M539.61 116.60v1.8M547.44 116.60v1.8M553.51 116.60v1.8M558.47 116.60v1.8M562.66 116.60v1.8M566.30 116.60v1.8M569.50 116.60v1.8M572.37 116.60v1.8M591.23 116.60v1.8M602.27 116.60v1.8M610.10 116.60v1.8M616.17 116.60v1.8M621.13 116.60v1.8M625.32 116.60v1.8M628.96 116.60v1.8M632.16 116.60v1.8M635.03 116.60v1.8M653.89 116.60v1.8M664.93 116.60v1.8M672.76 116.60v1.8M678.83 116.60v1.8M683.79 116.60v1.8M687.98 116.60v1.8M691.62 116.60v1.8M694.82 116.60v1.8M697.69 116.60v1.8M716.55 116.60v1.8M727.59 116.60v1.8M735.42 116.60v1.8M741.49 116.60v1.8M746.45 116.60v1.8M750.64 116.60v1.8M754.28 116.60v1.8M757.48 116.60v1.8M760.35 116.60v1.8M779.21 116.60v1.8M790.25 116.60v1.8M798.08 116.60v1.8M804.15 116.60v1.8M809.11 116.60v1.8M813.30 116.60v1.8M816.94 116.60v1.8M820.14 116.60v1.8M823.01 116.60v1.8M841.87 116.60v1.8M852.91 116.60v1.8M860.74 116.60v1.8M866.81 116.60v1.8M871.77 116.60v1.8M875.96 116.60v1.8M879.60 116.60v1.8M882.80 116.60v1.8M465.91 177.40v1.8M476.95 177.40v1.8M484.78 177.40v1.8M490.85 177.40v1.8M495.81 177.40v1.8M500.00 177.40v1.8M503.64 177.40v1.8M506.84 177.40v1.8M509.71 177.40v1.8M528.57 177.40v1.8M539.61 177.40v1.8M547.44 177.40v1.8M553.51 177.40v1.8M558.47 177.40v1.8M562.66 177.40v1.8M566.30 177.40v1.8M569.50 177.40v1.8M572.37 177.40v1.8M591.23 177.40v1.8M602.27 177.40v1.8M610.10 177.40v1.8M616.17 177.40v1.8M621.13 177.40v1.8M625.32 177.40v1.8M628.96 177.40v1.8M632.16 177.40v1.8M635.03 177.40v1.8M653.89 177.40v1.8M664.93 177.40v1.8M672.76 177.40v1.8M678.83 177.40v1.8M683.79 177.40v1.8M687.98 177.40v1.8M691.62 177.40v1.8M694.82 177.40v1.8M697.69 177.40v1.8M716.55 177.40v1.8M727.59 177.40v1.8M735.42 177.40v1.8M741.49 177.40v1.8M746.45 177.40v1.8M750.64 177.40v1.8M754.28 177.40v1.8M757.48 177.40v1.8M760.35 177.40v1.8M779.21 177.40v1.8M790.25 177.40v1.8M798.08 177.40v1.8M804.15 177.40v1.8M809.11 177.40v1.8M813.30 177.40v1.8M816.94 177.40v1.8M820.14 177.40v1.8M823.01 177.40v1.8M841.87 177.40v1.8M852.91 177.40v1.8M860.74 177.40v1.8M866.81 177.40v1.8M871.77 177.40v1.8M875.96 177.40v1.8M879.60 177.40v1.8M882.80 177.40v1.8M465.91 237.90v1.8M476.95 237.90v1.8M484.78 237.90v1.8M490.85 237.90v1.8M495.81 237.90v1.8M500.00 237.90v1.8M503.64 237.90v1.8M506.84 237.90v1.8M509.71 237.90v1.8M528.57 237.90v1.8M539.61 237.90v1.8M547.44 237.90v1.8M553.51 237.90v1.8M558.47 237.90v1.8M562.66 237.90v1.8M566.30 237.90v1.8M569.50 237.90v1.8M572.37 237.90v1.8M591.23 237.90v1.8M602.27 237.90v1.8M610.10 237.90v1.8M616.17 237.90v1.8M621.13 237.90v1.8M625.32 237.90v1.8M628.96 237.90v1.8M632.16 237.90v1.8M635.03 237.90v1.8M653.89 237.90v1.8M664.93 237.90v1.8M672.76 237.90v1.8M678.83 237.90v1.8M683.79 237.90v1.8M687.98 237.90v1.8M691.62 237.90v1.8M694.82 237.90v1.8M697.69 237.90v1.8M716.55 237.90v1.8M727.59 237.90v1.8M735.42 237.90v1.8M741.49 237.90v1.8M746.45 237.90v1.8M750.64 237.90v1.8M754.28 237.90v1.8M757.48 237.90v1.8M760.35 237.90v1.8M779.21 237.90v1.8M790.25 237.90v1.8M798.08 237.90v1.8M804.15 237.90v1.8M809.11 237.90v1.8M813.30 237.90v1.8M816.94 237.90v1.8M820.14 237.90v1.8M823.01 237.90v1.8M841.87 237.90v1.8M852.91 237.90v1.8M860.74 237.90v1.8M866.81 237.90v1.8M871.77 237.90v1.8M875.96 237.90v1.8M879.60 237.90v1.8M882.80 237.90v1.8M465.91 252.90v1.8M476.95 252.90v1.8M484.78 252.90v1.8M490.85 252.90v1.8M495.81 252.90v1.8M500.00 252.90v1.8M503.64 252.90v1.8M506.84 252.90v1.8M509.71 252.90v1.8M528.57 252.90v1.8M539.61 252.90v1.8M547.44 252.90v1.8M553.51 252.90v1.8M558.47 252.90v1.8M562.66 252.90v1.8M566.30 252.90v1.8M569.50 252.90v1.8M572.37 252.90v1.8M591.23 252.90v1.8M602.27 252.90v1.8M610.10 252.90v1.8M616.17 252.90v1.8M621.13 252.90v1.8M625.32 252.90v1.8M628.96 252.90v1.8M632.16 252.90v1.8M635.03 252.90v1.8M653.89 252.90v1.8M664.93 252.90v1.8M672.76 252.90v1.8M678.83 252.90v1.8M683.79 252.90v1.8M687.98 252.90v1.8M691.62 252.90v1.8M694.82 252.90v1.8M697.69 252.90v1.8M716.55 252.90v1.8M727.59 252.90v1.8M735.42 252.90v1.8M741.49 252.90v1.8M746.45 252.90v1.8M750.64 252.90v1.8M754.28 252.90v1.8M757.48 252.90v1.8M760.35 252.90v1.8M779.21 252.90v1.8M790.25 252.90v1.8M798.08 252.90v1.8M804.15 252.90v1.8M809.11 252.90v1.8M813.30 252.90v1.8M816.94 252.90v1.8M820.14 252.90v1.8M823.01 252.90v1.8M841.87 252.90v1.8M852.91 252.90v1.8M860.74 252.90v1.8M866.81 252.90v1.8M871.77 252.90v1.8M875.96 252.90v1.8M879.60 252.90v1.8M882.80 252.90v1.8" stroke="#9a9a9a" stroke-width="1.1" fill="none"/><path d="M447.3 284.07h5.5M447.3 268.96h5.5M447.3 253.85h9M447.3 238.74h5.5M447.3 223.63h5.5M447.3 208.52h5.5M447.3 193.41h5.5M447.3 178.30h9M447.3 163.19h5.5M447.3 148.08h5.5M447.3 132.97h5.5M447.3 117.86h5.5M447.3 102.75h9M447.3 87.64h5.5M447.3 72.53h5.5M886.3 287.20h-6M886.3 275.10h-6M886.3 263.00h-6M886.3 250.90h-6M886.3 238.80h-6M886.3 226.70h-6M886.3 214.60h-6M886.3 202.50h-6M886.3 190.40h-6M886.3 178.30h-6M886.3 166.20h-6M886.3 154.10h-6M886.3 142.00h-6M886.3 129.90h-6M886.3 117.80h-6M886.3 105.70h-6M886.3 93.60h-6M886.3 81.50h-6M886.3 69.40h-6" stroke="#aaa" stroke-width="1" fill="none"/><path d="M491.75 233.25C495.62 231.43 506.96 226.14 515.00 222.30C523.04 218.46 531.67 214.15 540.00 210.20C548.33 206.25 556.67 202.30 565.00 198.60C573.33 194.90 583.33 190.60 590.00 188.00C596.67 185.40 600.83 184.17 605.00 183.00C609.17 181.83 610.00 181.58 615.00 181.00C620.00 180.42 623.96 179.96 635.00 179.50C646.04 179.04 670.83 178.46 681.25 178.25C691.67 178.04 689.79 178.12 697.50 178.25C705.21 178.38 719.17 178.46 727.50 179.00C735.83 179.54 741.25 180.38 747.50 181.50C753.75 182.62 758.75 183.71 765.00 185.75C771.25 187.79 778.75 191.12 785.00 193.75C791.25 196.38 796.25 198.58 802.50 201.50C808.75 204.42 819.17 209.62 822.50 211.25" stroke="#00a800" stroke-width="1.25" fill="none"/><path d="M491.75 124.50C493.96 124.53 499.04 124.49 505.00 124.70C510.96 124.91 519.58 124.99 527.50 125.75C535.42 126.51 545.00 127.92 552.50 129.25C560.00 130.58 566.25 131.83 572.50 133.75C578.75 135.67 584.58 138.12 590.00 140.75C595.42 143.38 600.00 146.58 605.00 149.50C610.00 152.42 615.00 155.54 620.00 158.25C625.00 160.96 629.17 163.38 635.00 165.75C640.83 168.12 647.21 170.42 655.00 172.50C662.79 174.58 674.67 176.88 681.75 178.25C688.83 179.62 690.71 179.29 697.50 180.75C704.29 182.21 715.00 184.17 722.50 187.00C730.00 189.83 736.25 194.21 742.50 197.75C748.75 201.29 753.75 204.71 760.00 208.25C766.25 211.79 773.33 216.08 780.00 219.00C786.67 221.92 792.92 223.92 800.00 225.75C807.08 227.58 818.75 229.29 822.50 230.00" stroke="#c00000" stroke-width="1.25" fill="none"/><circle cx="681.75" cy="178.2" r="3.3" fill="#f00"/><path d="M681.75 180.6 L685.6 187.5 H677.9 Z" fill="#000" stroke="#ffee00" stroke-width="1.4"/><rect x="687.2" y="74.2" width="182.4" height="53.6" fill="none" stroke="#a0a0a0" stroke-width="1"/><rect x="703.75" y="82" width="37.5" height="9.75" fill="#008000"/><rect x="703.75" y="105.5" width="37.5" height="10" fill="#f00"/><path d="M850 63.2 H878.5 Q880.5 63.2 880.5 65.2 V93 Q880.5 95.5 878.6 93.6 L849.3 64.6 Q848 63.2 850 63.2 Z" fill="#6a6a6a"/><circle cx="874" cy="69.6" r="3.6" fill="none" stroke="#d0d0d0" stroke-width="1.5"/><path d="M871.3 72.3 L865.3 78.3" stroke="#d0d0d0" stroke-width="2.2" stroke-linecap="round"/></svg>
<svg class="b" style="left:447px;top:165px;width:8px;height:22px;overflow:hidden" viewBox="447 165 8 22"><circle cx="447.6" cy="179.4" r="3.7" fill="#0a900a"/><path d="M443.6 170.2 H451.3 L447.4 178.2 Z" fill="#ffe600"/></svg>
<span class="t" style="left:758.76px;top:81.00px;font-size:12px;color:#00a000;font-weight:bold;transform:scaleX(1.0122);">Gain</span>
<span class="t" style="left:758.52px;top:104.00px;font-size:12px;color:#f00;font-weight:bold;transform:scaleX(0.9300);letter-spacing:-0.015px;">Phase</span>
<span class="t" style="left:459.69px;top:97.00px;font-size:11px;color:#fff;font-weight:bold;transform:scaleX(0.9300);letter-spacing:-0.097px;">50 dB</span>
<span class="t" style="left:459.64px;top:173.00px;font-size:11px;color:#fff;font-weight:bold;transform:scaleX(0.9300);letter-spacing:-0.047px;">0 dB</span>
<span class="t" style="left:459.64px;top:249.00px;font-size:11px;color:#fff;font-weight:bold;transform:scaleX(0.9304);">-50 dB</span>
<span class="t" style="left:858.37px;top:112.00px;font-size:11px;color:#fff;font-weight:bold;transform:scaleX(0.9516);">100 °</span>
<span class="t" style="left:869.12px;top:173.00px;font-size:11px;color:#fff;font-weight:bold;transform:scaleX(0.9796);">0 °</span>
<span class="t" style="left:853.88px;top:233.00px;font-size:11px;color:#fff;font-weight:bold;transform:scaleX(0.9684);">-100 °</span>
<span class="t" style="left:493.12px;top:287.00px;font-size:11px;color:#fff;font-weight:bold;transform:scaleX(0.9608);">100 Hz</span>
<span class="t" style="left:558.11px;top:287.00px;font-size:11px;color:#fff;font-weight:bold;transform:scaleX(0.9669);">1 kHz</span>
<span class="t" style="left:618.62px;top:287.00px;font-size:11px;color:#fff;font-weight:bold;transform:scaleX(0.9608);">10 kHz</span>
<span class="t" style="left:678.62px;top:287.00px;font-size:11px;color:#fff;font-weight:bold;transform:scaleX(0.9579);">100 kHz</span>
<span class="t" style="left:744.35px;top:287.00px;font-size:11px;color:#fff;font-weight:bold;transform:scaleX(0.9920);">1 MHz</span>
<span class="t" style="left:804.34px;top:287.00px;font-size:11px;color:#fff;font-weight:bold;transform:scaleX(0.9973);">10 MHz</span>
</div>
<div id="waveform">
<div class="b" style="left:445px;top:301px;width:444.00px;height:273.00px;background:linear-gradient(#c8c8c8,#a8a8a8 4px,#a0a0a0);border-radius:2px;"></div>
<div class="b" style="left:447.5px;top:306px;width:438.80px;height:22.30px;background:#343434;"></div>
<span class="t" style="left:459.25px;top:310.00px;font-size:13.5px;color:#fff;transform:scaleX(1.0700);-webkit-text-stroke:0.45px #fff;letter-spacing:0.772px;">Wavef…</span>
<div class="b" style="left:447.3px;top:328.5px;width:439.00px;height:242.30px;background:#000;"></div>
<svg class="b" style="left:0;top:0;width:1040px;height:650px" viewBox="0 0 1040 650"><path d="M590 310.8 H586.3 V324 H590 M744.3 310.8 H748 V324 H744.3 M586.3 317.4 H748" stroke="#ddd" stroke-width="1.1" fill="none"/><path d="M660.9 306.3 H672.5 L666.7 310.9 Z" fill="#f8942a"/><path d="M661.9 315 H671.4 V324 H668.9 L666.65 327.2 L664.4 324 H661.9 Z" fill="#1c1c1c" stroke="#f8942a" stroke-width="1.4"/><rect x="447.3" y="425.8" width="439" height="47.6" fill="#f6f200"/><g fill="none" stroke="#a4a4a4" stroke-width="1.15"><path d="M491.10 329V571" stroke-dasharray="1 3.844"/><path d="M534.95 329V571" stroke-dasharray="1 3.844"/><path d="M578.80 329V571" stroke-dasharray="1 3.844"/><path d="M622.65 329V571" stroke-dasharray="1 3.844"/><path d="M710.35 329V571" stroke-dasharray="1 3.844"/><path d="M754.20 329V571" stroke-dasharray="1 3.844"/><path d="M798.05 329V571" stroke-dasharray="1 3.844"/><path d="M841.90 329V571" stroke-dasharray="1 3.844"/><path d="M447.3 329.50H886.3" stroke-dasharray="1 7.77" stroke-dashoffset="0.05"/><path d="M447.3 353.72H886.3" stroke-dasharray="1 7.77" stroke-dashoffset="0.05"/><path d="M447.3 377.94H886.3" stroke-dasharray="1 7.77" stroke-dashoffset="0.05"/><path d="M447.3 402.16H886.3" stroke-dasharray="1 7.77" stroke-dashoffset="0.05"/><path d="M447.3 426.38H886.3" stroke-dasharray="1 7.77" stroke-dashoffset="0.05"/><path d="M447.3 474.82H886.3" stroke-dasharray="1 7.77" stroke-dashoffset="0.05"/><path d="M447.3 499.04H886.3" stroke-dasharray="1 7.77" stroke-dashoffset="0.05"/><path d="M447.3 523.26H886.3" stroke-dasharray="1 7.77" stroke-dashoffset="0.05"/><path d="M447.3 547.48H886.3" stroke-dasharray="1 7.77" stroke-dashoffset="0.05"/><path d="M447.3 571.70H886.3" stroke-dasharray="1 7.77" stroke-dashoffset="0.05"/></g><path d="M447.8 329V571" stroke="#777" stroke-width="1" stroke-dasharray="1 3.844" fill="none"/><rect x="447.3" y="426.6" width="439" height="46.2" fill="#f6f200" opacity="0.62"/><path d="M482.5 450.6H868" stroke="#b6b6a0" stroke-width="1" stroke-dasharray="3.9 4.2" stroke-dashoffset="3" fill="none"/><path d="M666.5 360V566.4" stroke="#c4c4c4" stroke-width="1.1" stroke-dasharray="4.8 3.65" fill="none"/><path d="M657.8 328.7 H674.8 L666.3 336.6 Z" fill="#f8942a"/><path d="M659 338.1 H673.6 V352.7 H669.3 L666.3 358.6 L663.3 352.7 H659 Z" fill="#000" stroke="#f8942a" stroke-width="1.5"/><path d="M448.5 440 Q448.5 437.6 451 437.6 H474.5 L482.6 450 L474.5 462.4 H451 Q448.5 462.4 448.5 460 Z" fill="#fffb46" stroke="#e4dc30" stroke-width="0.8"/><path d="M868.3 450.3 L877.5 442 V447.3 H886.3 V453.3 H877.5 V458.6 Z" fill="#fffb46" stroke="#5a5200" stroke-width="0.9"/></svg>
<span class="t" style="left:663.91px;top:316.00px;font-size:8.8px;color:#f8942a;font-weight:bold;transform:scaleX(1.0122);">T</span>
<span class="t" style="left:662.17px;top:339.00px;font-size:13px;color:#f8942a;font-weight:bold;transform:scaleX(0.9696);">T</span>
<span class="t" style="left:458.24px;top:446.00px;font-size:11px;color:#111;transform:scaleX(0.9300);-webkit-text-stroke:0.3px #111;letter-spacing:-0.638px;">C 1</span>
<span class="t" style="left:833.70px;top:372.00px;font-size:11px;color:#f4ee10;font-weight:bold;transform:scaleX(0.9500);text-shadow:0 0 1.5px #000,0 0 1px #000;">1.55286 V</span>
<span class="t" style="left:833.70px;top:396.00px;font-size:11px;color:#f4ee10;font-weight:bold;transform:scaleX(0.9500);text-shadow:0 0 1.5px #000,0 0 1px #000;">1.03524 V</span>
<span class="t" style="left:830.25px;top:421.00px;font-size:11px;color:#f4ee10;font-weight:bold;transform:scaleX(0.9500);text-shadow:0 0 1.5px #000,0 0 1px #000;">517.62 mV</span>
<span class="t" style="left:826.75px;top:469.00px;font-size:11px;color:#f4ee10;font-weight:bold;transform:scaleX(0.9500);text-shadow:0 0 1.5px #000,0 0 1px #000;">-517.62 mV</span>
<span class="t" style="left:830.25px;top:493.00px;font-size:11px;color:#f4ee10;font-weight:bold;transform:scaleX(0.9500);text-shadow:0 0 1.5px #000,0 0 1px #000;">-1.03524 V</span>
<span class="t" style="left:830.25px;top:517.00px;font-size:11px;color:#f4ee10;font-weight:bold;transform:scaleX(0.9500);text-shadow:0 0 1.5px #000,0 0 1px #000;">-1.55286 V</span>
<span class="t" style="left:830.25px;top:541.00px;font-size:11px;color:#f4ee10;font-weight:bold;transform:scaleX(0.9500);text-shadow:0 0 1.5px #000,0 0 1px #000;">-2.07048 V</span>
<div class="b" style="left:820px;top:340px;width:52px;height:24px;overflow:hidden"><span class="t" style="left:13.70px;top:8.00px;font-size:11px;color:#f4ee10;font-weight:bold;transform:scaleX(0.9500);text-shadow:0 0 1.5px #000,0 0 1px #000;">2.07048 V</span></div>
<svg class="b" style="left:845px;top:332px;width:40px;height:38px" viewBox="845 332 40 38"><path d="M850 335.2 H878.5 Q880.5 335.2 880.5 337.2 V365 Q880.5 367.5 878.6 365.6 L849.3 336.6 Q848 335.2 850 335.2 Z" fill="#6a6a6a"/><circle cx="874" cy="341.6" r="3.6" fill="none" stroke="#d0d0d0" stroke-width="1.5"/><path d="M871.3 344.3 L865.3 350.3" stroke="#d0d0d0" stroke-width="2.2" stroke-linecap="round"/></svg>
<span class="t" style="left:476.43px;top:556.00px;font-size:11px;color:#e0e0e0;transform:scaleX(0.9508);-webkit-text-stroke:0.2px #e0e0e0;">-40 µs</span>
<span class="t" style="left:520.28px;top:556.00px;font-size:11px;color:#e0e0e0;transform:scaleX(0.9508);-webkit-text-stroke:0.2px #e0e0e0;">-30 µs</span>
<span class="t" style="left:564.13px;top:556.00px;font-size:11px;color:#e0e0e0;transform:scaleX(0.9508);-webkit-text-stroke:0.2px #e0e0e0;">-20 µs</span>
<span class="t" style="left:607.98px;top:556.00px;font-size:11px;color:#e0e0e0;transform:scaleX(0.9508);-webkit-text-stroke:0.2px #e0e0e0;">-10 µs</span>
<span class="t" style="left:659.89px;top:556.00px;font-size:11px;color:#e0e0e0;transform:scaleX(0.9300);-webkit-text-stroke:0.2px #e0e0e0;letter-spacing:-0.237px;">0 s</span>
<span class="t" style="left:697.32px;top:556.00px;font-size:11px;color:#e0e0e0;transform:scaleX(0.9458);-webkit-text-stroke:0.2px #e0e0e0;">10 µs</span>
<span class="t" style="left:741.44px;top:556.00px;font-size:11px;color:#e0e0e0;transform:scaleX(0.9358);-webkit-text-stroke:0.2px #e0e0e0;">20 µs</span>
<span class="t" style="left:785.44px;top:556.00px;font-size:11px;color:#e0e0e0;transform:scaleX(0.9300);-webkit-text-stroke:0.2px #e0e0e0;letter-spacing:-0.000px;">30 µs</span>
<span class="t" style="left:829.45px;top:556.00px;font-size:11px;color:#e0e0e0;transform:scaleX(0.9300);-webkit-text-stroke:0.2px #e0e0e0;letter-spacing:-0.041px;">40 µs</span>
</div>
<div id="side">
<div class="b" style="left:901px;top:30px;width:144.00px;height:544.50px;background:#2d2d2d;border:1px solid #4c4946;"></div>
<div class="b" style="left:908px;top:39px;width:58.40px;height:34.80px;background:linear-gradient(#3b3b3b,#303030 45%,#252525);border:1px solid #625a52;border-radius:5px;box-shadow:0 0 0 1px #1c1c1c;"></div>
<div class="b" style="left:974.5px;top:39px;width:58.50px;height:34.80px;background:linear-gradient(#3b3b3b,#303030 45%,#252525);border:1px solid #625a52;border-radius:5px;box-shadow:0 0 0 1px #1c1c1c;"></div>
<div class="b" style="left:908px;top:81.5px;width:58.40px;height:34.50px;background:linear-gradient(#3b3b3b,#303030 45%,#252525);border:1px solid #625a52;border-radius:5px;box-shadow:0 0 0 1px #1c1c1c;"></div>
<div class="b" style="left:974.5px;top:81.5px;width:58.50px;height:34.50px;background:linear-gradient(#3b3b3b,#303030 45%,#252525);border:1px solid #625a52;border-radius:5px;box-shadow:0 0 0 1px #1c1c1c;"></div>
<div class="b" style="left:904.3px;top:122.4px;width:132.30px;height:1.30px;background:#544e48;"></div>
<div class="b" style="left:904.3px;top:169.6px;width:132.30px;height:1.30px;background:#544e48;"></div>
<div class="b" style="left:908px;top:128.5px;width:58.40px;height:34.70px;background:linear-gradient(#3b3b3b,#303030 45%,#252525);border:1px solid #625a52;border-radius:5px;box-shadow:0 0 0 1px #1c1c1c;"></div>
<div class="b" style="left:974.5px;top:128.5px;width:58.50px;height:34.70px;background:linear-gradient(#3b3b3b,#303030 45%,#252525);border:1px solid #625a52;border-radius:5px;box-shadow:0 0 0 1px #1c1c1c;"></div>
<span class="t" style="left:913.12px;top:48.00px;font-size:13.7px;color:#fff;transform:scaleX(0.9982);-webkit-text-stroke:0.45px #fff;">Cursors</span>
<span class="t" style="left:980.52px;top:48.00px;font-size:13.7px;color:#fff;transform:scaleX(1.0700);-webkit-text-stroke:0.45px #fff;letter-spacing:0.139px;">Callout</span>
<span class="t" style="left:908.85px;top:91.00px;font-size:13.7px;color:#fff;transform:scaleX(1.0513);-webkit-text-stroke:0.45px #fff;">Measure</span>
<span class="t" style="left:981.89px;top:91.00px;font-size:13.7px;color:#fff;transform:scaleX(0.9959);-webkit-text-stroke:0.45px #fff;">Search</span>
<span class="t" style="left:979.63px;top:138.00px;font-size:13.7px;color:#fff;transform:scaleX(1.0700);-webkit-text-stroke:0.45px #fff;letter-spacing:0.394px;">More...</span>
<svg class="b" style="left:924px;top:133px;width:28px;height:26px" viewBox="924 133 28 26"><rect x="927.7" y="136.4" width="18" height="16" fill="none" stroke="#e4e4e4" stroke-width="1.7" stroke-dasharray="2.7 1.9"/><circle cx="938.1" cy="142.3" r="3.6" fill="none" stroke="#e0e0e0" stroke-width="1.5"/><path d="M935.4 145 L931.6 148.6" stroke="#e0e0e0" stroke-width="2.2" stroke-linecap="round"/><path d="M942.4 148.2 L948.8 151.6 L946.2 152.3 L947.9 155.4 L946.6 156 L945 152.9 L943 154.8 Z" fill="#c4c4c4"/></svg>
<div class="b" style="left:904.3px;top:181.4px;width:132.80px;height:128.80px;background:#c9c9c9;border-radius:4.5px;overflow:hidden;"><div class="b" style="left:0;top:0;width:100%;height:17.8px;background:#000"></div></div>
<span class="t" style="left:908.73px;top:182.00px;font-size:13.2px;color:#fff02a;font-weight:bold;transform:scaleX(1.0155);">Power 1</span>
<svg class="b" style="left:980px;top:183px;width:56px;height:14px" viewBox="980 183 56 14"><path d="M989 185 H1014 L1005 195.3 H989 A5.15 5.15 0 0 1 989 185 Z" fill="#ffee33"/><path d="M1015.4 185 H1026.8 A5.15 5.15 0 0 1 1026.8 195.3 H1006.4 Z" fill="#22d3e0"/></svg>
<span class="t" style="left:991.36px;top:187.00px;font-size:8.5px;color:#333;transform:scaleX(1.0000);-webkit-text-stroke:0.25px #333;">1</span>
<span class="t" style="left:1018.18px;top:187.00px;font-size:8.5px;color:#114;transform:scaleX(1.0000);">2</span>
<span class="t" style="left:908.74px;top:200.00px;font-size:13.2px;color:#303030;transform:scaleX(1.0004);-webkit-text-stroke:0.25px #303030;">Control Loop Resp…</span>
<div class="b" style="left:909.2px;top:218.2px;width:41.60px;height:15.80px;background:#000;"></div>
<span class="t" style="left:916.79px;top:219.00px;font-size:13.2px;color:#0a9a0a;transform:scaleX(1.0700);-webkit-text-stroke:0.3px #0a9a0a;letter-spacing:0.272px;">GM:</span>
<span class="t" style="left:951.33px;top:217.00px;font-size:13.2px;color:#303030;transform:scaleX(1.0236);-webkit-text-stroke:0.25px #303030;">0.435 dB</span>
<span class="t" style="left:950.81px;top:236.00px;font-size:13.2px;color:#303030;transform:scaleX(0.9989);-webkit-text-stroke:0.25px #303030;">@54.19 kHz</span>
<div class="b" style="left:909.2px;top:256.4px;width:41.60px;height:15.60px;background:#000;"></div>
<span class="t" style="left:917.67px;top:256.00px;font-size:13.2px;color:#ff1818;transform:scaleX(1.0700);-webkit-text-stroke:0.3px #ff1818;letter-spacing:0.122px;">PM:</span>
<span class="t" style="left:951.44px;top:255.00px;font-size:13.2px;color:#303030;transform:scaleX(1.0700);letter-spacing:0.222px;-webkit-text-stroke:0.25px #303030;">--</span>
<span class="t" style="left:950.86px;top:273.00px;font-size:13.2px;color:#303030;transform:scaleX(0.9536);-webkit-text-stroke:0.25px #303030;">@--</span>
<span class="t" style="left:908.59px;top:293.00px;font-size:13.2px;color:#111;font-weight:bold;transform:scaleX(1.0587);">No PM value</span>
<svg class="b" style="left:892px;top:295px;width:7px;height:16px" viewBox="892 295 7 16"><circle cx="895.5" cy="298.3" r="1.25" fill="#d0d0d0"/><circle cx="895.5" cy="302.9" r="1.25" fill="#d0d0d0"/><circle cx="895.5" cy="307.5" r="1.25" fill="#d0d0d0"/></svg>
</div>
<div id="bottom">
<div class="b" style="left:0px;top:574.5px;width:1040.00px;height:75.50px;background:#2a2a2a;"></div>
<div class="b" style="left:2.3px;top:577px;width:82.60px;height:70.30px;background:#c9c9c9;border-radius:3.5px;overflow:hidden;box-shadow:0 0 0 0.8px #1c1c1c;"><div class="b" style="left:0;top:0;width:100%;height:17.1px;background:#ffee33"></div></div>
<span class="t" style="left:6.85px;top:577.00px;font-size:13.5px;color:#111;transform:scaleX(0.9650);-webkit-text-stroke:0.25px #111;">Ch 1</span>
<span class="t" style="left:6.94px;top:596.00px;font-size:13.2px;color:#303030;transform:scaleX(1.0693);-webkit-text-stroke:0.25px #303030;">517.62 m…</span>
<span class="t" style="left:6.45px;top:613.00px;font-size:13.2px;color:#303030;transform:scaleX(1.0602);-webkit-text-stroke:0.25px #303030;">10 X</span>
<span class="t" style="left:6.82px;top:631.00px;font-size:13.2px;color:#303030;transform:scaleX(1.0331);-webkit-text-stroke:0.25px #303030;">200 MHz</span>
<span class="t" style="left:68.23px;top:630.00px;font-size:8px;color:#222;font-weight:bold;transform:scaleX(1.0000);">B</span>
<span class="t" style="left:73.54px;top:634.00px;font-size:7.5px;color:#222;font-weight:bold;transform:scaleX(1.0000);">w</span>
<div class="b" style="left:86.8px;top:577px;width:82.00px;height:70.30px;background:#c9c9c9;border-radius:3.5px;overflow:hidden;box-shadow:0 0 0 0.8px #1c1c1c;"><div class="b" style="left:0;top:0;width:100%;height:17.1px;background:#1f4646"></div></div>
<span class="t" style="left:91.11px;top:577.00px;font-size:13.5px;color:#2ad4e4;transform:scaleX(1.0183);">Ch 2</span>
<span class="t" style="left:91.52px;top:596.00px;font-size:13.2px;color:#303030;transform:scaleX(1.0525);-webkit-text-stroke:0.25px #303030;">48.47 mV…</span>
<span class="t" style="left:90.75px;top:613.00px;font-size:13.2px;color:#303030;transform:scaleX(1.0602);-webkit-text-stroke:0.25px #303030;">10 X</span>
<span class="t" style="left:91.12px;top:631.00px;font-size:13.2px;color:#303030;transform:scaleX(1.0321);-webkit-text-stroke:0.25px #303030;">200 MHz</span>
<span class="t" style="left:152.48px;top:630.00px;font-size:8px;color:#222;font-weight:bold;transform:scaleX(1.0000);">B</span>
<span class="t" style="left:157.84px;top:634.00px;font-size:7.5px;color:#222;font-weight:bold;transform:scaleX(1.0000);">w</span>
<svg class="b" style="left:0;top:610px;width:180px;height:20px" viewBox="0 610 180 20"><path d="M50.6 618.6 q1.3 -5 2.8 -5 q1.6 0 2.6 4.6 q1 4.6 2.6 4.6 q1.5 0 2.5 -4.6" fill="none" stroke="#303030" stroke-width="1.5"/><path d="M134.9 618.6 q1.3 -5 2.8 -5 q1.6 0 2.6 4.6 q1 4.6 2.6 4.6 q1.5 0 2.5 -4.6" fill="none" stroke="#303030" stroke-width="1.5"/></svg>
<div class="b" style="left:388.8px;top:577px;width:40.00px;height:70.50px;background:linear-gradient(#3b3b3b,#303030 45%,#252525);border:1px solid #625a52;border-radius:5px;box-shadow:0 0 0 1px #1c1c1c;"><div class="b" style="left:4.5px;top:5.8px;right:3.6px;height:3.2px;border-radius:1.6px;background:#f04a62"></div></div>
<div class="b" style="left:432.6px;top:577px;width:40.40px;height:70.50px;background:linear-gradient(#3b3b3b,#303030 45%,#252525);border:1px solid #625a52;border-radius:5px;box-shadow:0 0 0 1px #1c1c1c;"><div class="b" style="left:4.5px;top:5.8px;right:3.6px;height:3.2px;border-radius:1.6px;background:#8fe02a"></div></div>
<div class="b" style="left:477px;top:577px;width:40.50px;height:70.50px;background:linear-gradient(#3b3b3b,#303030 45%,#252525);border:1px solid #625a52;border-radius:5px;box-shadow:0 0 0 1px #1c1c1c;"><div class="b" style="left:4.5px;top:5.8px;right:3.6px;height:3.2px;border-radius:1.6px;background:#5646f2"></div></div>
<div class="b" style="left:526.3px;top:577px;width:40.50px;height:70.50px;background:linear-gradient(#3b3b3b,#303030 45%,#252525);border:1px solid #625a52;border-radius:5px;box-shadow:0 0 0 1px #1c1c1c;"></div>
<div class="b" style="left:571.3px;top:577px;width:40.50px;height:70.50px;background:linear-gradient(#3b3b3b,#303030 45%,#252525);border:1px solid #625a52;border-radius:5px;box-shadow:0 0 0 1px #1c1c1c;"><div class="b" style="left:4.5px;top:5.8px;right:3.6px;height:3.2px;border-radius:1.6px;background:#585858"></div></div>
<div class="b" style="left:521.5px;top:577px;width:1.10px;height:71.00px;background:#555;"></div>
<div class="b" style="left:616px;top:577px;width:1.20px;height:71.00px;background:#555;"></div>
<div class="b" style="left:946.2px;top:577px;width:1.10px;height:71.00px;background:#555;"></div>
<span class="t" style="left:402.89px;top:605.00px;font-size:20px;color:#eee;transform:scaleX(1.0104);">3</span>
<span class="t" style="left:446.88px;top:605.00px;font-size:20px;color:#eee;transform:scaleX(1.0490);">4</span>
<span class="t" style="left:483.36px;top:602.00px;font-size:13.5px;color:#eee;transform:scaleX(1.0582);">D15</span>
<span class="t" style="left:485.94px;top:617.00px;font-size:13.5px;color:#eee;transform:scaleX(1.0375);">-D0</span>
<span class="t" style="left:529.84px;top:595.00px;font-size:13.5px;color:#eee;transform:scaleX(1.0700);letter-spacing:0.453px;">Math</span>
<span class="t" style="left:535.95px;top:609.00px;font-size:13.5px;color:#eee;transform:scaleX(0.9760);">Ref</span>
<span class="t" style="left:535.46px;top:624.00px;font-size:13.5px;color:#eee;transform:scaleX(0.9662);">Bus</span>
<span class="t" style="left:581.95px;top:610.00px;font-size:13.5px;color:#eee;transform:scaleX(0.9762);">PG</span>
<div class="b" style="left:621.9px;top:577.6px;width:99.50px;height:69.10px;background:#c9c9c9;border-radius:3.5px;overflow:hidden;box-shadow:0 0 0 0.8px #1c1c1c;"><div class="b" style="left:0;top:0;width:100%;height:17.1px;background:#575757"></div></div>
<span class="t" style="left:626.25px;top:579.00px;font-size:13.5px;color:#fff;transform:scaleX(0.9796);-webkit-text-stroke:0.45px #fff;">AFG</span>
<span class="t" style="left:625.13px;top:595.00px;font-size:13.2px;color:#303030;transform:scaleX(0.9613);-webkit-text-stroke:0.25px #303030;">Sine</span>
<span class="t" style="left:625.08px;top:612.00px;font-size:13.2px;color:#303030;transform:scaleX(1.0442);-webkit-text-stroke:0.25px #303030;">9.6718 MHz</span>
<span class="t" style="left:625.37px;top:630.00px;font-size:13.2px;color:#303030;transform:scaleX(1.0354);-webkit-text-stroke:0.25px #303030;">1 Vpp</span>
<div class="b" style="left:725.5px;top:577.6px;width:103.10px;height:69.10px;background:#c9c9c9;border-radius:3.5px;overflow:hidden;box-shadow:0 0 0 0.8px #1c1c1c;"><div class="b" style="left:0;top:0;width:100%;height:17.1px;background:#575757"></div></div>
<span class="t" style="left:728.84px;top:579.00px;font-size:13.5px;color:#fff;transform:scaleX(1.0700);-webkit-text-stroke:0.45px #fff;letter-spacing:0.469px;">Horizontal</span>
<span class="t" style="left:729.02px;top:595.00px;font-size:13.2px;color:#303030;transform:scaleX(0.9925);-webkit-text-stroke:0.25px #303030;">10 µs/div</span>
<span class="t" style="left:729.44px;top:612.00px;font-size:13.2px;color:#303030;transform:scaleX(0.9365);-webkit-text-stroke:0.25px #303030;">SR: 1.25 GS/s</span>
<span class="t" style="left:728.96px;top:630.00px;font-size:13.2px;color:#303030;transform:scaleX(0.9883);-webkit-text-stroke:0.25px #303030;">RL: 125 kpts</span>
<div class="b" style="left:831.8px;top:577.6px;width:109.40px;height:69.10px;background:#c9c9c9;border-radius:3.5px;overflow:hidden;box-shadow:0 0 0 0.8px #1c1c1c;"><div class="b" style="left:0;top:0;width:100%;height:17.1px;background:#575757"></div></div>
<span class="t" style="left:836.71px;top:579.00px;font-size:13.5px;color:#fff;transform:scaleX(1.0700);-webkit-text-stroke:0.45px #fff;letter-spacing:0.034px;">Trigger</span>
<div class="b" style="left:907.8px;top:579.7px;width:27.20px;height:14.50px;background:#ffee33;border-radius:3.5px;box-shadow:0 0 0 0.8px #222;"></div>
<span class="t" style="left:918.42px;top:579.00px;font-size:13px;color:#222;transform:scaleX(0.9000);">1</span>
<svg class="b" style="left:834px;top:596px;width:20px;height:14px" viewBox="834 596 20 14"><path d="M835.8 608.6 H840 L845.4 599.2 H850.8" fill="none" stroke="#4c4aa6" stroke-width="1.6"/></svg>
<span class="t" style="left:859.02px;top:596.00px;font-size:13.2px;color:#303030;transform:scaleX(1.0394);-webkit-text-stroke:0.25px #303030;">0 V</span>
<div class="b" style="left:952px;top:579.7px;width:81.00px;height:28.80px;background:#12d412;border-radius:4px;box-shadow:0 0 0 0.8px #1a1a1a;"></div>
<span class="t" style="left:962.07px;top:586.00px;font-size:13px;color:#fff;font-weight:bold;transform:scaleX(1.0268);">Triggered</span>
<div class="b" style="left:952px;top:612.7px;width:81.00px;height:33.90px;background:#c9c9c9;border-radius:3.5px;box-shadow:0 0 0 0.6px #555;"></div>
<span class="t" style="left:952.32px;top:615.00px;font-size:13.2px;color:#303030;transform:scaleX(1.0358);-webkit-text-stroke:0.25px #303030;">26 May 2023</span>
<span class="t" style="left:956.99px;top:630.00px;font-size:13.2px;color:#303030;transform:scaleX(1.0339);-webkit-text-stroke:0.25px #303030;">9:42:54 PM</span>
</div>
</div>
</body></html>
